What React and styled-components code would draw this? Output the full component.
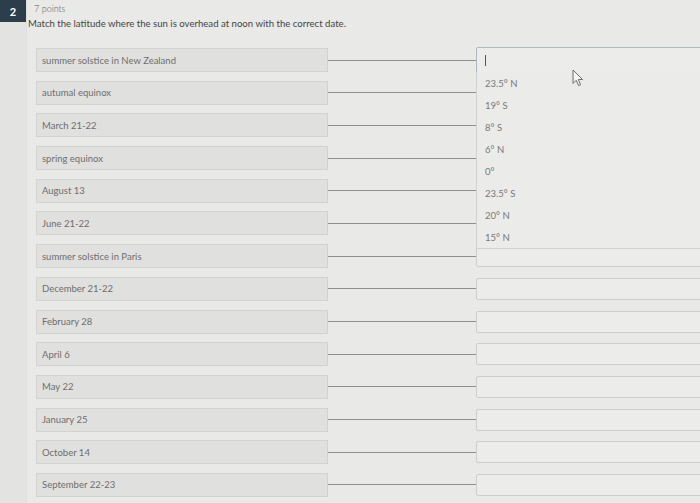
import React from 'react'
import styled, { createGlobalStyle } from 'styled-components'

const GlobalStyle = createGlobalStyle`
  html, body {
    margin: 0;
    padding: 0;
    background: #e9e9e7;
    overflow: hidden;
    font-family: Lato, "Open Sans", "Liberation Sans", sans-serif;
  }
`

const rows = [
  'summer solstice in New Zealand',
  'autumal equinox',
  'March 21-22',
  'spring equinox',
  'August 13',
  'June 21-22',
  'summer solstice in Paris',
  'December 21-22',
  'February 28',
  'April 6',
  'May 22',
  'January 25',
  'October 14',
  'September 22-23',
]

const options = ['23.5° N', '19° S', '8° S', '6° N', '0°', '23.5° S', '20° N', '15° N']

function App() {
  return (
    <PageSt>
      <GlobalStyle />
      <GutterSt>
        <BadgeSt>2</BadgeSt>
      </GutterSt>
      <ContentSt>
        <PointsSt>7 points</PointsSt>
        <QuestionSt>Match the latitude where the sun is overhead at noon with the correct date.</QuestionSt>
        <RowsSt>
          {rows.map((label, i) => (
            <RowSt key={label}>
              <LabelBoxSt>{label}</LabelBoxSt>
              <ConnectorSt />
              <SelectSt focused={i === 0 ? 1 : 0}>
                {i === 0 ? <CaretSt /> : null}
                {i === 0 ? (
                  <MenuSt>
                    {options.map(o => (
                      <OptionSt key={o}>{o}</OptionSt>
                    ))}
                  </MenuSt>
                ) : null}
              </SelectSt>
            </RowSt>
          ))}
        </RowsSt>
      </ContentSt>
      <PointerSt width="12" height="18" viewBox="0 0 12 18">
        <path d="M1 1 L1 14.5 L4.2 11.3 L6.6 16.6 L8.6 15.7 L6.3 10.5 L10.6 10.5 Z" fill="#f4f4f4" stroke="#6d6d6d" strokeWidth="1" strokeLinejoin="round" />
      </PointerSt>
    </PageSt>
  )
}

const PageSt = styled.div`
  position: relative;
  display: flex;
  width: 700px;
  height: 503px;
  overflow: hidden;
`

const GutterSt = styled.div`
  flex: 0 0 25px;
  background: #e3e3e1;
  border-right: 1px solid #dededc;
`

const BadgeSt = styled.div`
  width: 26px;
  height: 22px;
  background: #2c3e4c;
  color: #fff;
  font-weight: 700;
  font-size: 11px;
  display: flex;
  align-items: center;
  justify-content: center;
`

const ContentSt = styled.div`
  flex: 1;
  padding-left: 1px;
  display: flex;
  flex-direction: column;
`

const PointsSt = styled.div`
  margin: 3px 0 0 6px;
  font-size: 9px;
  line-height: 12px;
  color: #5a5a5a;
  font-weight: 300;
`

const QuestionSt = styled.div`
  margin-top: 2px;
  font-size: 9.6px;
  line-height: 14px;
  color: #444;
`

const RowsSt = styled.div`
  margin: 17px 0 0 8px;
  display: flex;
  flex-direction: column;
  gap: 8.7px;
`

const RowSt = styled.div`
  display: flex;
  align-items: center;
  height: 24px;
`

const LabelBoxSt = styled.div`
  flex: 0 0 292px;
  box-sizing: border-box;
  height: 24px;
  display: flex;
  align-items: center;
  padding-left: 5px;
  background: #e0e0de;
  border: 1px solid #d2d2d0;
  font-size: 9.5px;
  color: #6e6e6e;
`

const ConnectorSt = styled.div`
  flex: 0 0 148px;
  height: 1px;
  background: #8f8f8f;
`

const SelectSt = styled.div`
  position: relative;
  flex: 0 0 250px;
  box-sizing: border-box;
  height: ${props => (props.focused ? '26px' : '22px')};
  background: #ececeb;
  border: 1px solid ${props => (props.focused ? '#aeb8c0' : '#cdcdcd')};
  border-radius: 2px;
  display: flex;
  align-items: center;
  padding-left: 8px;
`

const CaretSt = styled.div`
  width: 1px;
  height: 11px;
  background: #555;
`

const MenuSt = styled.div`
  position: absolute;
  top: 100%;
  left: -1px;
  right: -1px;
  background: #ebebea;
  border: 1px solid #d0d0d0;
  border-top: none;
  z-index: 2;
`

const OptionSt = styled.div`
  height: 22px;
  display: flex;
  align-items: center;
  padding-left: 8px;
  font-size: 9.5px;
  color: #787878;
`

const PointerSt = styled.svg`
  position: absolute;
  left: 572px;
  top: 69px;
  z-index: 3;
`

export default App
